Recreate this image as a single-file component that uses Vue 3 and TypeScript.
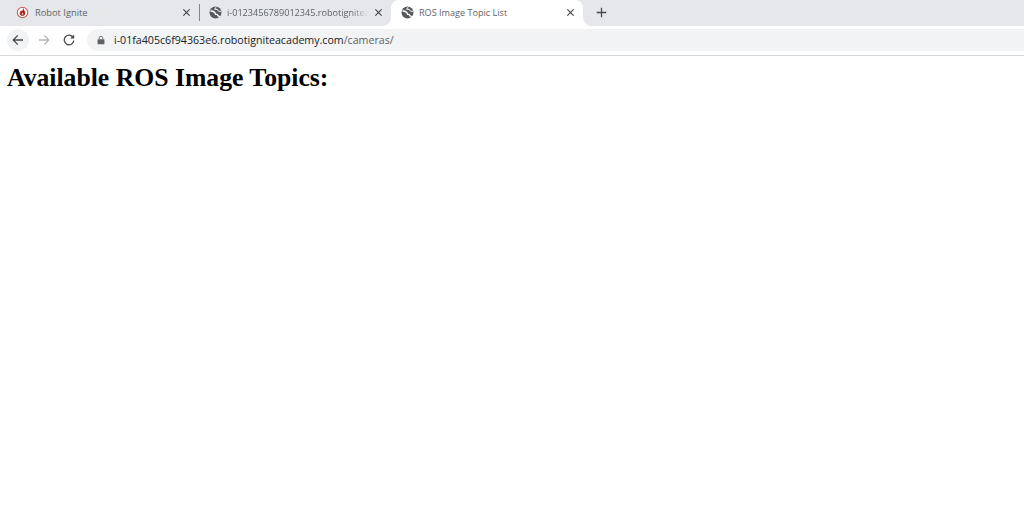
<script setup lang="ts">
interface Tab { title: string; icon: 'ignite' | 'globe'; active?: boolean; fade?: boolean }
const tabs: Tab[] = [
  { title: 'Robot Ignite', icon: 'ignite' },
  { title: 'i-0123456789012345.robotigniteacademy.com', icon: 'globe', fade: true },
  { title: 'ROS Image Topic List', icon: 'globe', active: true },
]
</script>

<template>
  <div class="browser">
    <div class="tabstrip">
      <div v-for="t in tabs" :key="t.title" class="tab" :class="{ active: t.active }">
        <svg v-if="t.icon === 'ignite'" class="favicon" viewBox="0 0 14 14">
          <circle cx="7" cy="7" r="5.6" fill="#fff" stroke="#c25a50" stroke-width="1.1" />
          <path d="M7.8 1.6 C8 4 10 5.4 10 7.8 C10 9.6 8.6 10.6 7 10.6 C5.4 10.6 4 9.6 4 7.8 C4 6.4 5 5.8 5.4 4.6 C6 5 6.2 5.4 6.3 6 C7 5 7.8 3.4 7.8 1.6 Z" fill="#a8261f" />
          <path d="M7 7 C7.6 7.8 8.2 8.2 8 9 C7.8 9.6 6.4 9.6 6.2 9 C6 8.3 6.6 7.8 7 7 Z" fill="#f3c9c4" />
        </svg>
        <svg v-else class="favicon" viewBox="0 0 24 24">
          <circle cx="12" cy="12" r="11" fill="#55595d" />
          <path d="M2.5 9.5 C6 8.5 9 10 11 12.5 L12 15.5 H15 L17 18.5 L20 19.5" stroke="#fff" stroke-width="2.6" fill="none" />
          <path d="M13 2 L10.5 6 H15 L17.5 9.5 L22 10" stroke="#fff" stroke-width="1.8" fill="none" />
        </svg>
        <span class="title" :class="{ fade: t.fade }">{{ t.title }}</span>
        <svg class="close" viewBox="0 0 10 10">
          <path d="M1.5 1.5 L8.5 8.5 M8.5 1.5 L1.5 8.5" stroke="#45494d" stroke-width="1.3" fill="none" />
        </svg>
      </div>
      <svg class="plus" viewBox="0 0 12 12">
        <path d="M6 .8 V11.2 M.8 6 H11.2" stroke="#45494d" stroke-width="1.4" fill="none" />
      </svg>
    </div>

    <div class="toolbar">
      <div class="navbtn hovered">
        <svg viewBox="0 0 12 12"><path d="M11 6 H1.4 M5.8 1.4 L1.2 6 L5.8 10.6" stroke="#45494d" stroke-width="1.3" fill="none" /></svg>
      </div>
      <div class="navbtn">
        <svg viewBox="0 0 12 12"><path d="M1 6 H10.6 M6.2 1.4 L10.8 6 L6.2 10.6" stroke="#b4b7ba" stroke-width="1.3" fill="none" /></svg>
      </div>
      <div class="navbtn">
        <svg viewBox="0 0 12 12">
          <path d="M10.2 3.6 A4.8 4.8 0 1 0 10.8 6.6" stroke="#45494d" stroke-width="1.25" fill="none" />
          <path d="M11.2 .6 V4.6 H7.2 Z" fill="#45494d" />
        </svg>
      </div>
      <div class="omnibox">
        <svg class="lock" viewBox="0 0 10 12">
          <path fill="#5f6368" d="M1.5 5 H8.5 A.8 .8 0 0 1 9.3 5.8 V10.4 A.8 .8 0 0 1 8.5 11.2 H1.5 A.8 .8 0 0 1 .7 10.4 V5.8 A.8 .8 0 0 1 1.5 5 Z" />
          <path d="M2.8 5 V3.5 A2.2 2.2 0 0 1 7.2 3.5 V5" stroke="#5f6368" stroke-width="1.1" fill="none" />
        </svg>
        <span class="url"><span class="host">i-01fa405c6f94363e6.robotigniteacademy.com</span><span class="path">/cameras/</span></span>
      </div>
    </div>

    <main class="page">
      <h1>Available ROS Image Topics:</h1>
    </main>
  </div>
</template>

<style scoped>
.browser {
  width: 1024px;
  height: 511px;
  background: #fff;
  overflow: hidden;
  display: flex;
  flex-direction: column;
}
.tabstrip {
  height: 26px;
  background: #e5e7ea;
  display: flex;
  align-items: stretch;
  flex: none;
}
.tab {
  display: flex;
  align-items: center;
  padding: 0 8px 2px 16px;
  box-sizing: border-box;
  position: relative;
  flex: none;
}
.tab:nth-child(1) {
  width: 199px;
}
.tab:nth-child(2) {
  width: 192px;
  padding-left: 10px;
}
.tab:nth-child(2)::before {
  content: "";
  position: absolute;
  left: 0;
  top: 4px;
  bottom: 5px;
  width: 1px;
  background: #84888c;
}
.tab.active {
  width: 192px;
  background: #fff;
  border-radius: 8px 8px 0 0;
  padding-left: 10px;
}
.tab.active::before,
.tab.active::after {
  content: "";
  position: absolute;
  bottom: 0;
  width: 8px;
  height: 8px;
  background: radial-gradient(circle at 0 0, transparent 7.5px, #fff 8px);
}
.tab.active::before {
  left: -8px;
}
.tab.active::after {
  right: -8px;
  background: radial-gradient(circle at 100% 0, transparent 7.5px, #fff 8px);
}
.favicon {
  width: 13px;
  height: 13px;
  flex: none;
  margin-right: 6px;
}
.tab:nth-child(n + 2) .favicon {
  margin-right: 5px;
}
.title {
  flex: 1;
  min-width: 0;
  white-space: nowrap;
  overflow: hidden;
  font: 9.3px "Open Sans", "Noto Sans", sans-serif;
  color: #5f6368;
}
.tab:nth-child(n + 2) .title {
  font-size: 9.1px;
}
.title.fade {
  -webkit-mask-image: linear-gradient(to right, #000 88%, transparent);
  mask-image: linear-gradient(to right, #000 88%, transparent);
}
.close {
  width: 9px;
  height: 9px;
  flex: none;
  margin-left: 6px;
}
.plus {
  width: 11px;
  height: 11px;
  margin: 7px 0 0 13px;
}
.toolbar {
  height: 30px;
  box-sizing: border-box;
  flex: none;
  background: #fff;
  border-bottom: 1px solid #d5d7d9;
  display: flex;
  align-items: center;
  padding: 0 0 1px 7px;
}
.navbtn {
  width: 22px;
  height: 22px;
  border-radius: 50%;
  margin-right: 3.5px;
  display: flex;
  align-items: center;
  justify-content: center;
  flex: none;
}
.navbtn svg {
  width: 12px;
  height: 12px;
}
.navbtn.hovered {
  background: #f1f3f4;
}
.omnibox {
  flex: 1;
  height: 22px;
  margin-left: 3.5px;
  background: #f1f3f4;
  border-radius: 11px 0 0 11px;
  display: flex;
  align-items: center;
  padding-left: 10px;
}
.lock {
  width: 8px;
  height: 10px;
  margin-right: 9px;
  flex: none;
}
.url {
  font: 10.65px "Open Sans", "Noto Sans", sans-serif;
  white-space: nowrap;
}
.host {
  color: #202124;
}
.path {
  color: #5f6368;
}
.page {
  flex: 1;
  padding: 7px 7px;
}
h1 {
  margin: 0;
  font: bold 25.7px "Liberation Serif", "Times New Roman", serif;
  color: #000;
}
</style>
